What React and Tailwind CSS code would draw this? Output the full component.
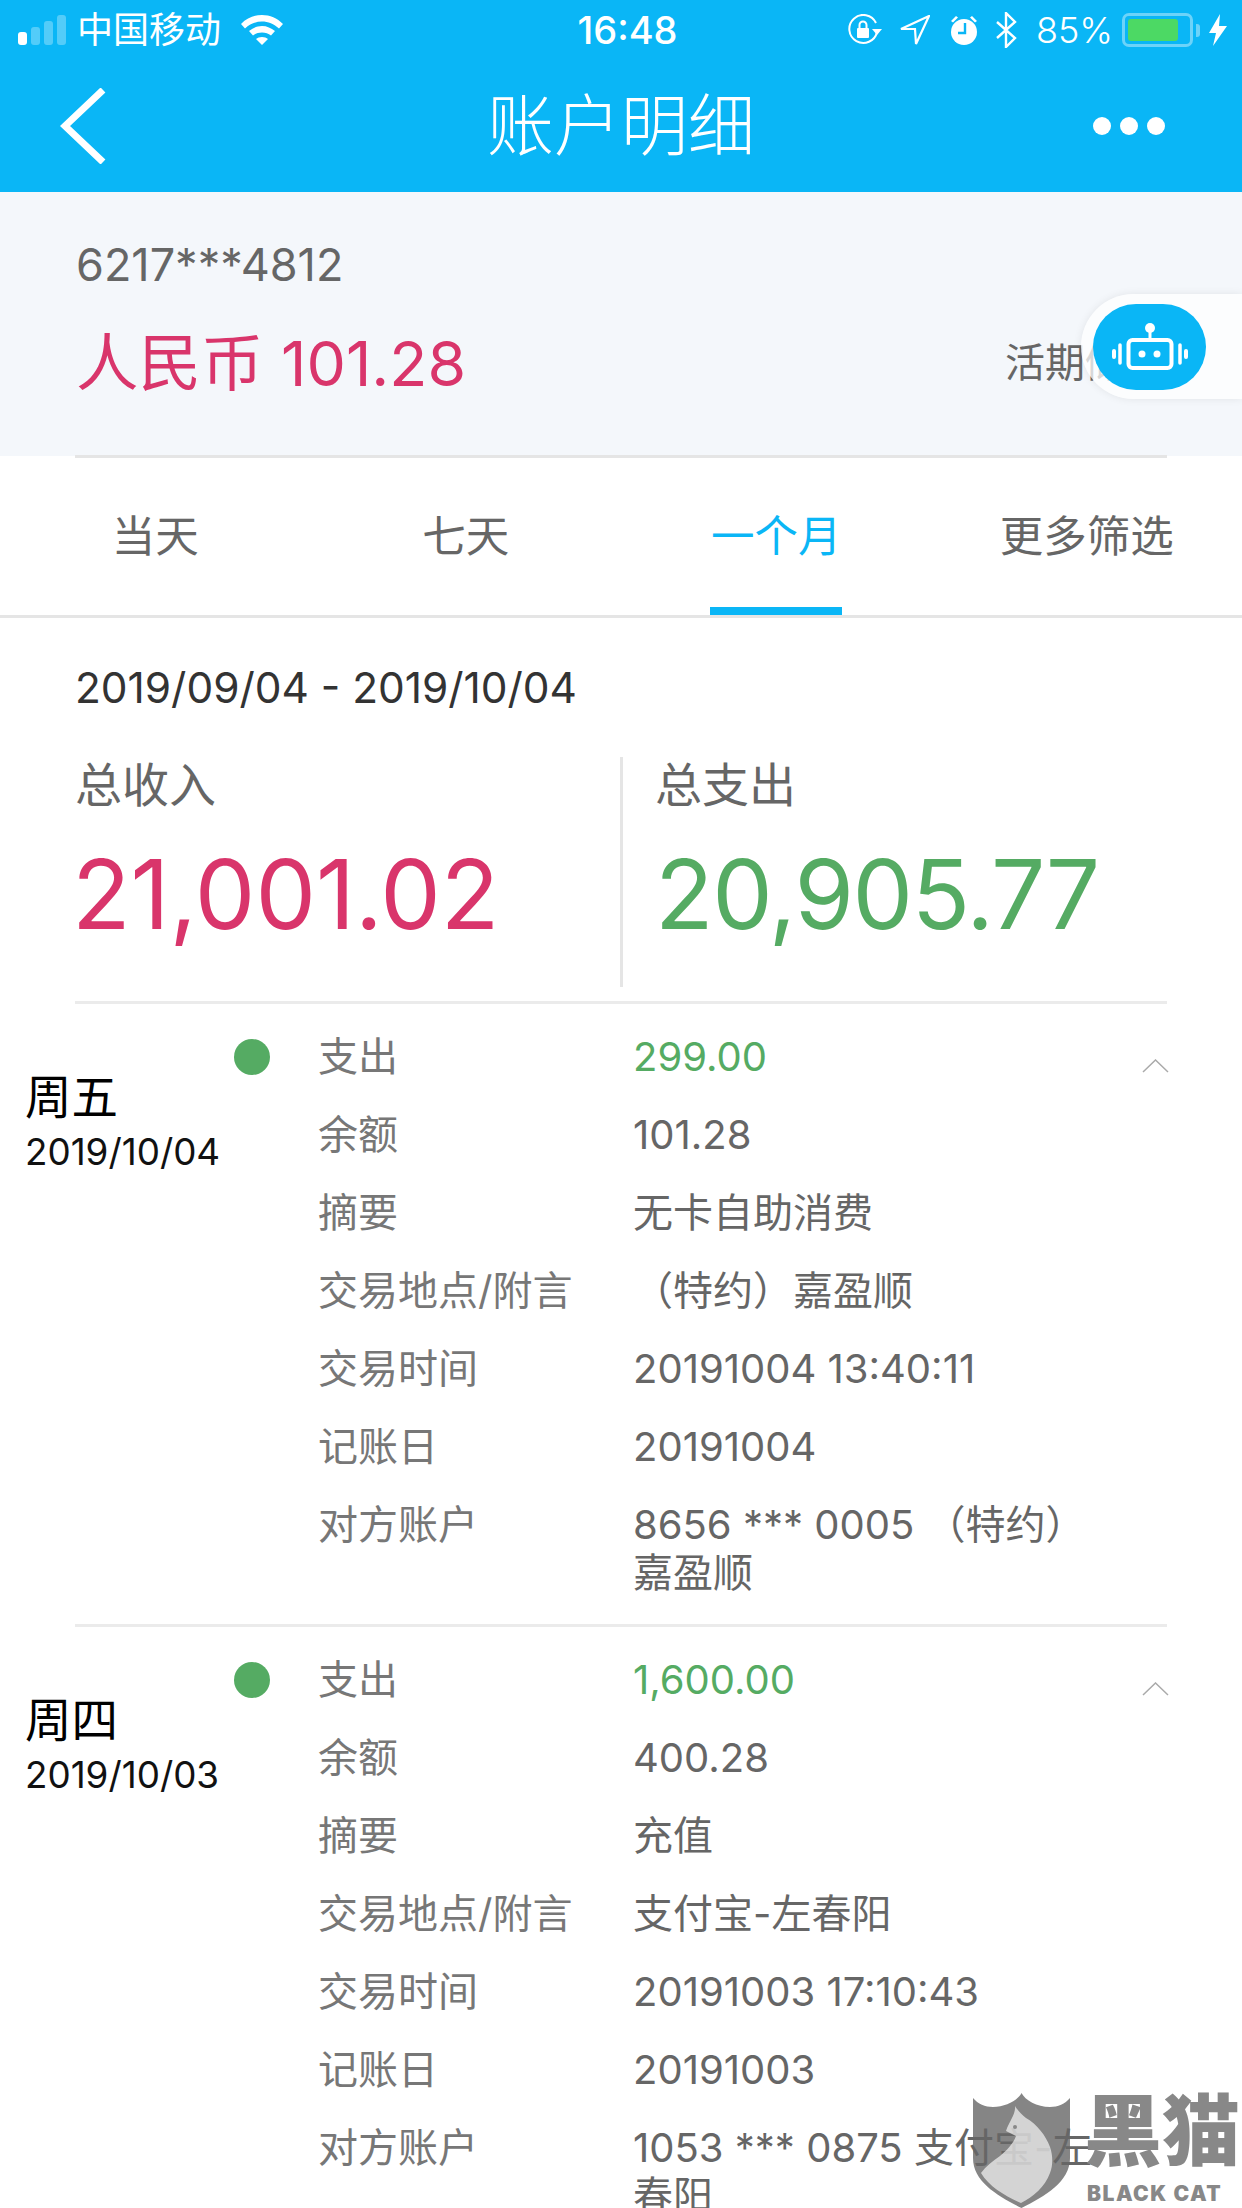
import React from "react";

const records = [
  {
    week: "周五",
    date: "2019/10/04",
    rows: [
      ["支出", "299.00"],
      ["余额", "101.28"],
      ["摘要", "无卡自助消费"],
      ["交易地点/附言", "（特约）嘉盈顺"],
      ["交易时间", "20191004 13:40:11"],
      ["记账日", "20191004"],
    ],
    other: ["8656 *** 0005 （特约）", "嘉盈顺"],
  },
  {
    week: "周四",
    date: "2019/10/03",
    rows: [
      ["支出", "1,600.00"],
      ["余额", "400.28"],
      ["摘要", "充值"],
      ["交易地点/附言", "支付宝-左春阳"],
      ["交易时间", "20191003 17:10:43"],
      ["记账日", "20191003"],
    ],
    other: ["1053 *** 0875 支付宝-左", "春阳"],
  },
];

const tabs = ["当天", "七天", "一个月", "更多筛选"];

const StatusLeft = () => (
  <div className="flex items-center">
    <div className="flex items-end gap-[4px] h-[30px] mr-[11px]">
      <span className="w-[9px] h-[13px] rounded-[3px] bg-white" />
      <span className="w-[9px] h-[18px] rounded-[3px] bg-white/30" />
      <span className="w-[9px] h-[24px] rounded-[3px] bg-white/30" />
      <span className="w-[9px] h-[30px] rounded-[3px] bg-white/30" />
    </div>
    <span className="text-[36px] leading-[44px] text-white">中国移动</span>
    <svg className="ml-[20px]" width="42" height="30" viewBox="0 0 42 30" fill="white">
      <path d="M21 0C13 0 6 3 0 9l4 4.500C9 9 15 6.500 21 6.500S33 9 38 13.500L42 9C36 3 29 0 21 0z" />
      <path d="M21 11c-5 0-9 2-13 5l4 4.500c2.500-2 5.500-3 9-3s6.500 1 9 3l4-4.500c-4-3-8-5-13-5z" />
      <path d="M21 22c-2.500 0-4.500.8-6 2l6 6 6-6c-1.500-1.200-3.500-2-6-2z" />
    </svg>
  </div>
);

const StatusRight = () => (
  <div className="flex items-center justify-end">
    <svg width="34" height="32" viewBox="0 0 34 32" fill="none" stroke="white" strokeWidth="2">
      <path d="M29 18a14 14 0 1 1-1-9" />
      <path d="M24 15h10l-5 6z" fill="white" stroke="none" />
      <rect x="9" y="14" width="12" height="10" rx="1" fill="white" stroke="none" />
      <path d="M11.500 14v-3a3.500 3.500 0 0 1 7 0v3" />
    </svg>
    <svg className="ml-[18px]" width="30" height="30" viewBox="0 0 30 30" fill="none" stroke="white" strokeWidth="2.200">
      <path d="M1 14L29 1 16 29l-1-15z" strokeLinejoin="miter" />
    </svg>
    <svg className="ml-[20px]" width="28" height="30" viewBox="0 0 28 30" fill="white">
      <path d="M1 6l5-5 2 1.500L3 7.500zM27 6l-5-5-2 1.500 5 5z" />
      <circle cx="14" cy="17" r="13" />
      <path d="M15 8v10H8" fill="none" stroke="#0ab6f6" strokeWidth="2.400" />
    </svg>
    <svg className="ml-[18px]" width="21" height="36" viewBox="0 0 21 36" fill="none" stroke="white" strokeWidth="2.400">
      <path d="M1 10l18 16-9 9V1l9 9L1 26" />
    </svg>
    <span className="ml-[19px] text-[36px] leading-[44px] font-light text-white">85%</span>
    <div className="ml-[9px] w-[71px] h-[34px] rounded-[7px] border-[3px] border-white/40 p-[3px]">
      <div className="w-[50px] h-full rounded-[3px] bg-[#4cd964]" />
    </div>
    <span className="ml-[3px] w-[4px] h-[13px] rounded-r-[3px] bg-white/40" />
    <svg className="ml-[9px] mr-[15px]" width="18" height="32" viewBox="0 0 18 32" fill="white">
      <path d="M11 0L0 19h7L4 32l14-20h-8z" />
    </svg>
  </div>
);

const Robot = () => (
  <svg width="76" height="50" viewBox="0 0 76 50" fill="none" stroke="white">
    <circle cx="38" cy="6" r="5" fill="white" stroke="none" />
    <path d="M38 8v10" strokeWidth="3" />
    <rect x="16.500" y="18" width="43" height="28" rx="4" strokeWidth="4" />
    <circle cx="30" cy="32" r="3.500" fill="white" stroke="none" />
    <circle cx="45" cy="32" r="3.500" fill="white" stroke="none" />
    <path d="M8 23v18M68 23v18" strokeWidth="3.500" strokeLinecap="round" />
    <path d="M2 29v6M74 29v6" strokeWidth="4" strokeLinecap="round" />
  </svg>
);

const Record = ({ item }) => (
  <div className="flex pt-[14px] pb-[27px]">
    <div className="w-[318px] pt-[21px] pl-[25px] pr-[48px] shrink-0">
      <div className="ml-auto w-[36px] h-[36px] rounded-full bg-[#55ab63]" />
      <p className="-mt-[2px] text-[46.500px] leading-[48px] text-black">{item.week}</p>
      <p className="mt-[11px] text-[36.800px] leading-[40px] text-[#111]">{item.date}</p>
    </div>
    <div className="flex-1 min-w-0 relative">
      {item.rows.map(([label, value], i) => (
        <div key={label} className="flex h-[78px] items-center text-[40px]">
          <span className="w-[315px] text-[#777]">{label}</span>
          <span className={i === 0 ? "text-[#55ab63]" : "text-[#666]"}>{value}</span>
        </div>
      ))}
      <div className="flex pt-[15px] text-[40px] leading-[48px]">
        <span className="w-[315px] text-[#777]">对方账户</span>
        <div className="text-[#666]">
          <p>{item.other[0]}</p>
          <p>{item.other[1]}</p>
        </div>
      </div>
      <svg className="absolute top-[41px] right-[73px]" width="27" height="14" viewBox="0 0 27 14" fill="none" stroke="#aaa" strokeWidth="1.500">
        <path d="M1 13L13.500 1 26 13" />
      </svg>
    </div>
  </div>
);

const Watermark = () => (
  <div className="absolute left-[973px] top-[2093px] w-[269px] h-[115px] pointer-events-none">
    <svg className="absolute left-0 top-0" width="97" height="115" viewBox="0 0 97 115">
      <path d="M48.500 0C45 7 33 14 20 14 12 14 5 11 0 5v60c0 24 25 38 48.500 50C72 103 97 89 97 65V5c-5 6-12 9-20 9C64 14 52 7 48.500 0z" fill="#666" opacity="0.8" />
      <path d="M42 13c1 8-6 16-9 25l10 5c-3 8-9 14-16 20-7 5-14 10-19 17 8 14 26 24 40 30 12-6 24-16 29-30 3-8 3-17 0-26-4-11-13-23-24-29-4-3-8-7-11-12z" fill="white" opacity="0.65" />
      <circle cx="42" cy="34" r="2" fill="#888" />
    </svg>
    <span className="absolute left-[111px] top-[-6px] whitespace-nowrap text-[78px] leading-[90px] font-black text-[#888]">黑猫</span>
    <span className="absolute left-[114px] top-[88px] whitespace-nowrap text-[21px] leading-[26px] font-black tracking-[1.500px] text-[#888]">BLACK CAT</span>
  </div>
);

const App = () => {
  return (
    <div className="relative w-[1242px] h-[2208px] overflow-hidden bg-white font-['Inter','Noto_Sans_CJK_SC',sans-serif]">
      <header className="bg-[#0ab6f6] h-[192px]">
        <div className="grid grid-cols-[1fr_auto_1fr] items-center h-[60px] pl-[18px]">
          <StatusLeft />
          <span className="text-[38px] font-medium text-white -ml-[5px]">16:48</span>
          <StatusRight />
        </div>
        <div className="relative flex items-center justify-center h-[132px]">
          <svg className="absolute left-[60px] top-[28px]" width="46" height="76" viewBox="0 0 46 76" fill="none" stroke="white" strokeWidth="7">
            <path d="M43 2L5 38l38 36" />
          </svg>
          <h1 className="text-[67px] font-light text-white">账户明细</h1>
          <div className="absolute right-[77px] flex gap-[9px]">
            <span className="w-[18px] h-[18px] rounded-full bg-white" />
            <span className="w-[18px] h-[18px] rounded-full bg-white" />
            <span className="w-[18px] h-[18px] rounded-full bg-white" />
          </div>
        </div>
      </header>

      <section className="bg-[#f4f7fb] h-[264px] px-[76px] pt-[46px]">
        <p className="text-[45px] leading-[54px] text-[#666]">6217***4812</p>
        <div className="mt-[33px] flex items-center justify-between">
          <p className="text-[62.500px] leading-[76px] text-[#d9356b]">人民币 101.28</p>
          <p className="text-[40px] text-[#666] whitespace-nowrap mr-[-77px] w-[238px]">活期储蓄</p>
        </div>
      </section>

      <div className="mx-[75px] h-[3px] bg-[#e5e5e5] -mt-[1px]" />

      <nav className="grid grid-cols-4 h-[160px] border-b-[3px] border-[#e5e5e5]">
        {tabs.map((t, i) => (
          <div key={t} className="relative flex items-center justify-center">
            <span className={`text-[43.500px] ${i === 2 ? "text-[#0ab6f6]" : "text-[#666]"}`}>{t}</span>
            {i === 2 && <span className="absolute bottom-0 left-[89px] w-[132px] h-[8px] bg-[#0ab6f6]" />}
          </div>
        ))}
      </nav>

      <p className="px-[75px] pt-[43px] text-[42.400px] leading-[54px] text-[#333]">2019/09/04 - 2019/10/04</p>

      <div className="grid grid-cols-2 mt-[42px] mx-[75px] h-[230px]">
        <div>
          <p className="text-[47px] leading-[56px] text-[#666]">总收入</p>
          <p className="mt-[23px] -ml-[3px] text-[96px] leading-[116px] text-[#d9356b]">21,001.02</p>
        </div>
        <div className="border-l-[3px] border-[#e5e5e5] -ml-[1px] pl-[32px]">
          <p className="text-[47px] leading-[56px] text-[#666]">总支出</p>
          <p className="mt-[23px] text-[96px] leading-[116px] tracking-[-1.400px] text-[#55ab63]">20,905.77</p>
        </div>
      </div>

      <div className="mt-[14px] mx-[75px] h-[3px] bg-[#ebebeb]" />

      {records.map((r, i) => (
        <React.Fragment key={r.date}>
          {i > 0 && <div className="mx-[75px] h-[3px] bg-[#ebebeb]" />}
          <Record item={r} />
        </React.Fragment>
      ))}

      <div className="absolute left-[1081px] top-[294px] w-[161px] h-[105px] rounded-l-[53px] bg-white/75 shadow-[0_0_8px_rgba(0,0,0,0.08)] flex items-center pl-[12px]">
        <div className="flex items-center justify-center w-[113px] h-[86px] rounded-[43px] bg-[#0ab6f6]">
          <Robot />
        </div>
      </div>

      <Watermark />
    </div>
  );
};

export default App;
